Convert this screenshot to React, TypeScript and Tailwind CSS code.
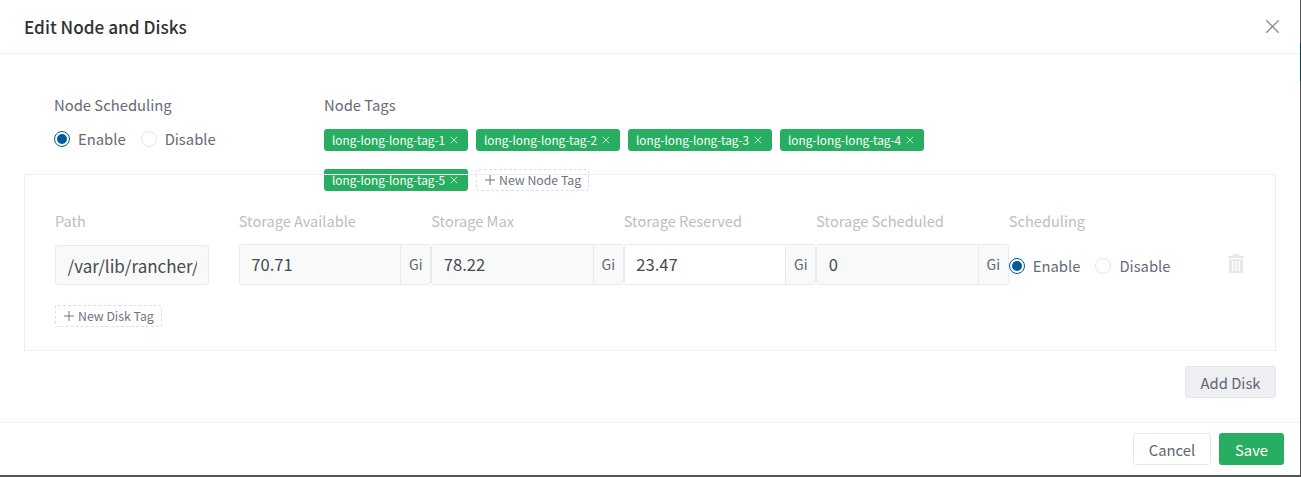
const FONT = "font-['Noto_Sans_CJK_SC','Noto_Sans',sans-serif]";

function CloseIcon({ size, className }: { size: number; className?: string }) {
  return (
    <svg width={size} height={size} viewBox="0 0 12 12" className={className} fill="none" stroke="currentColor" strokeWidth="1">
      <path d="M1 1l10 10M11 1L1 11" />
    </svg>
  );
}

function PlusIcon() {
  return (
    <svg width="10" height="10" viewBox="0 0 10 10" className="shrink-0 text-[#777]" fill="none" stroke="currentColor" strokeWidth="1">
      <path d="M5 0v10M0 5h10" />
    </svg>
  );
}

function TrashIcon() {
  return (
    <svg width="16" height="19" viewBox="0 0 16 19" className="text-[#e6e8ea]" fill="currentColor">
      <path fillRule="evenodd" d="M5.5 0h5l1 2H16v2H0V2h4.500zM1 5h14v12.500A1.500 1.500 0 0 1 13.500 19h-11A1.500 1.500 0 0 1 1 17.500zM4 7v10h1.500V7zm3.250 0v10h1.500V7zM10.500 7v10H12V7z" />
    </svg>
  );
}

function Radio({ label, checked }: { label: string; checked?: boolean }) {
  return (
    <label className="flex items-center gap-[8px] text-[14.8px] leading-[20px] text-[#666a75]">
      <span
        className={`flex h-[16px] w-[16px] items-center justify-center rounded-full border bg-white ${
          checked ? 'border-[#005a96]' : 'border-[#e3e5e8]'
        }`}
      >
        {checked && <span className="h-[10px] w-[10px] rounded-full bg-[#005a96]" />}
      </span>
      {label}
    </label>
  );
}

function RadioGroup() {
  return (
    <div className="flex gap-[15px]">
      <Radio label="Enable" checked />
      <Radio label="Disable" />
    </div>
  );
}

function NewTag({ label, width }: { label: string; width: string }) {
  return (
    <span className={`flex h-[22px] items-center gap-[4px] whitespace-nowrap rounded-[3px] border border-dashed border-[#dcdfe6] bg-white px-[8px] text-[12.3px] text-[#6f7480] ${width}`}>
      <PlusIcon />
      {label}
    </span>
  );
}

function StorageField({ label, value, disabled }: { label: string; value: string; disabled?: boolean }) {
  return (
    <div className="w-[192.5px] shrink-0">
      <div className="mb-[13px] h-[20px] text-[14.6px] leading-[20px] text-[#bdbdc2]">{label}</div>
      <div className="flex h-[41px] rounded-[3px] border border-[#e8eaed]">
        <input
          readOnly
          value={value}
          className={`min-w-0 flex-1 rounded-l-[3px] px-[11.500px] pb-[1px] text-[16.6px] text-[#4a4a4f] outline-none ${
            disabled ? 'bg-[#f8f9f9]' : 'bg-white'
          }`}
        />
        <span className="flex w-[30px] items-center justify-center border-l border-[#e8eaed] bg-[#f8f9f9] text-[14px] text-[#60656f]">
          Gi
        </span>
      </div>
    </div>
  );
}

const TAGS = ['long-long-long-tag-1', 'long-long-long-tag-2', 'long-long-long-tag-3', 'long-long-long-tag-4', 'long-long-long-tag-5'];

export default function App() {
  return (
    <div className={`h-[477px] w-full overflow-hidden bg-[linear-gradient(#555_43px,#0e3a44_43px,#0e3a44_81px,#555_81px)] ${FONT}`}>
      <div className="flex h-[475px] w-[1300px] flex-col bg-white">
        {/* Header */}
        <div className="flex h-[54px] shrink-0 items-center justify-between border-b border-[#f0f0f0] pl-[24px] pr-[20px]">
          <h2 className="text-[17.2px] font-medium text-[#303133]">Edit Node and Disks</h2>
          <CloseIcon size={15} className="text-[#8c8c8c]" />
        </div>

        {/* Body */}
        <div className="flex-1 px-[24px]">
          <div className="flex h-[120px] pl-[30px] pt-[41px]">
            <div className="w-[270px] shrink-0">
              <div className="mb-[14px] h-[20px] text-[14.8px] leading-[20px] text-[#666a75]">Node Scheduling</div>
              <RadioGroup />
            </div>
            <div className="w-[620px]">
              <div className="mb-[14px] h-[20px] text-[14.8px] leading-[20px] text-[#666a75]">Node Tags</div>
              <div className="flex flex-wrap gap-x-[8px] gap-y-[18px]">
                {TAGS.map((t) => (
                  <span
                    key={t}
                    className="flex h-[22px] w-[144px] items-center justify-between whitespace-nowrap rounded-[3px] bg-[#27ae60] pl-[8px] pr-[10px] text-[11.8px] text-white"
                  >
                    {t}
                    <CloseIcon size={8} />
                  </span>
                ))}
                <NewTag label="New Node Tag" width="w-[113px]" />
              </div>
            </div>
          </div>

          {/* Disk card */}
          <div className="relative h-[177px] border border-[#eeeeee] pl-[30px] pt-[36px]">
            <div className="flex">
              <div className="w-[183.8px] shrink-0">
                <div className="mb-[14px] h-[20px] text-[14.6px] leading-[20px] text-[#bdbdc2]">Path</div>
                <input
                  readOnly
                  value="/var/lib/rancher/longhorn/"
                  className="mb-[20px] h-[40px] w-[154px] rounded-[3px] border border-[#e8eaed] bg-[#f8f9f9] px-[11.500px] text-[17px] text-[#4a4a4f] outline-none"
                />
                <NewTag label="New Disk Tag" width="w-[107px]" />
              </div>
              <StorageField label="Storage Available" value="70.71" disabled />
              <StorageField label="Storage Max" value="78.22" disabled />
              <StorageField label="Storage Reserved" value="23.47" />
              <StorageField label="Storage Scheduled" value="0" disabled />
              <div className="w-[219px] shrink-0">
                <div className="mb-[25px] h-[20px] text-[14.6px] leading-[20px] text-[#bdbdc2]">Scheduling</div>
                <RadioGroup />
              </div>
              <div className="pt-[43px]">
                <TrashIcon />
              </div>
            </div>
          </div>

          <div className="mt-[15px] flex justify-end">
            <button className="h-[32px] w-[91px] rounded-[3px] border border-[#e4e6e9] bg-[#eeeff2] pt-[2px] text-[14.8px] text-[#60656f]">
              Add Disk
            </button>
          </div>
        </div>

        {/* Footer */}
        <div className="flex h-[53px] shrink-0 items-start justify-end gap-[8px] border-t border-[#f0f0f0] pr-[16px] pt-[10px]">
          <button className="h-[32px] w-[78px] rounded-[3px] border border-[#e4e6e9] bg-white pt-[2px] text-[14.8px] text-[#60656f]">Cancel</button>
          <button className="h-[32px] w-[65px] rounded-[3px] bg-[#27ae60] pt-[2px] text-[14.8px] text-white">Save</button>
        </div>
      </div>
    </div>
  );
}
